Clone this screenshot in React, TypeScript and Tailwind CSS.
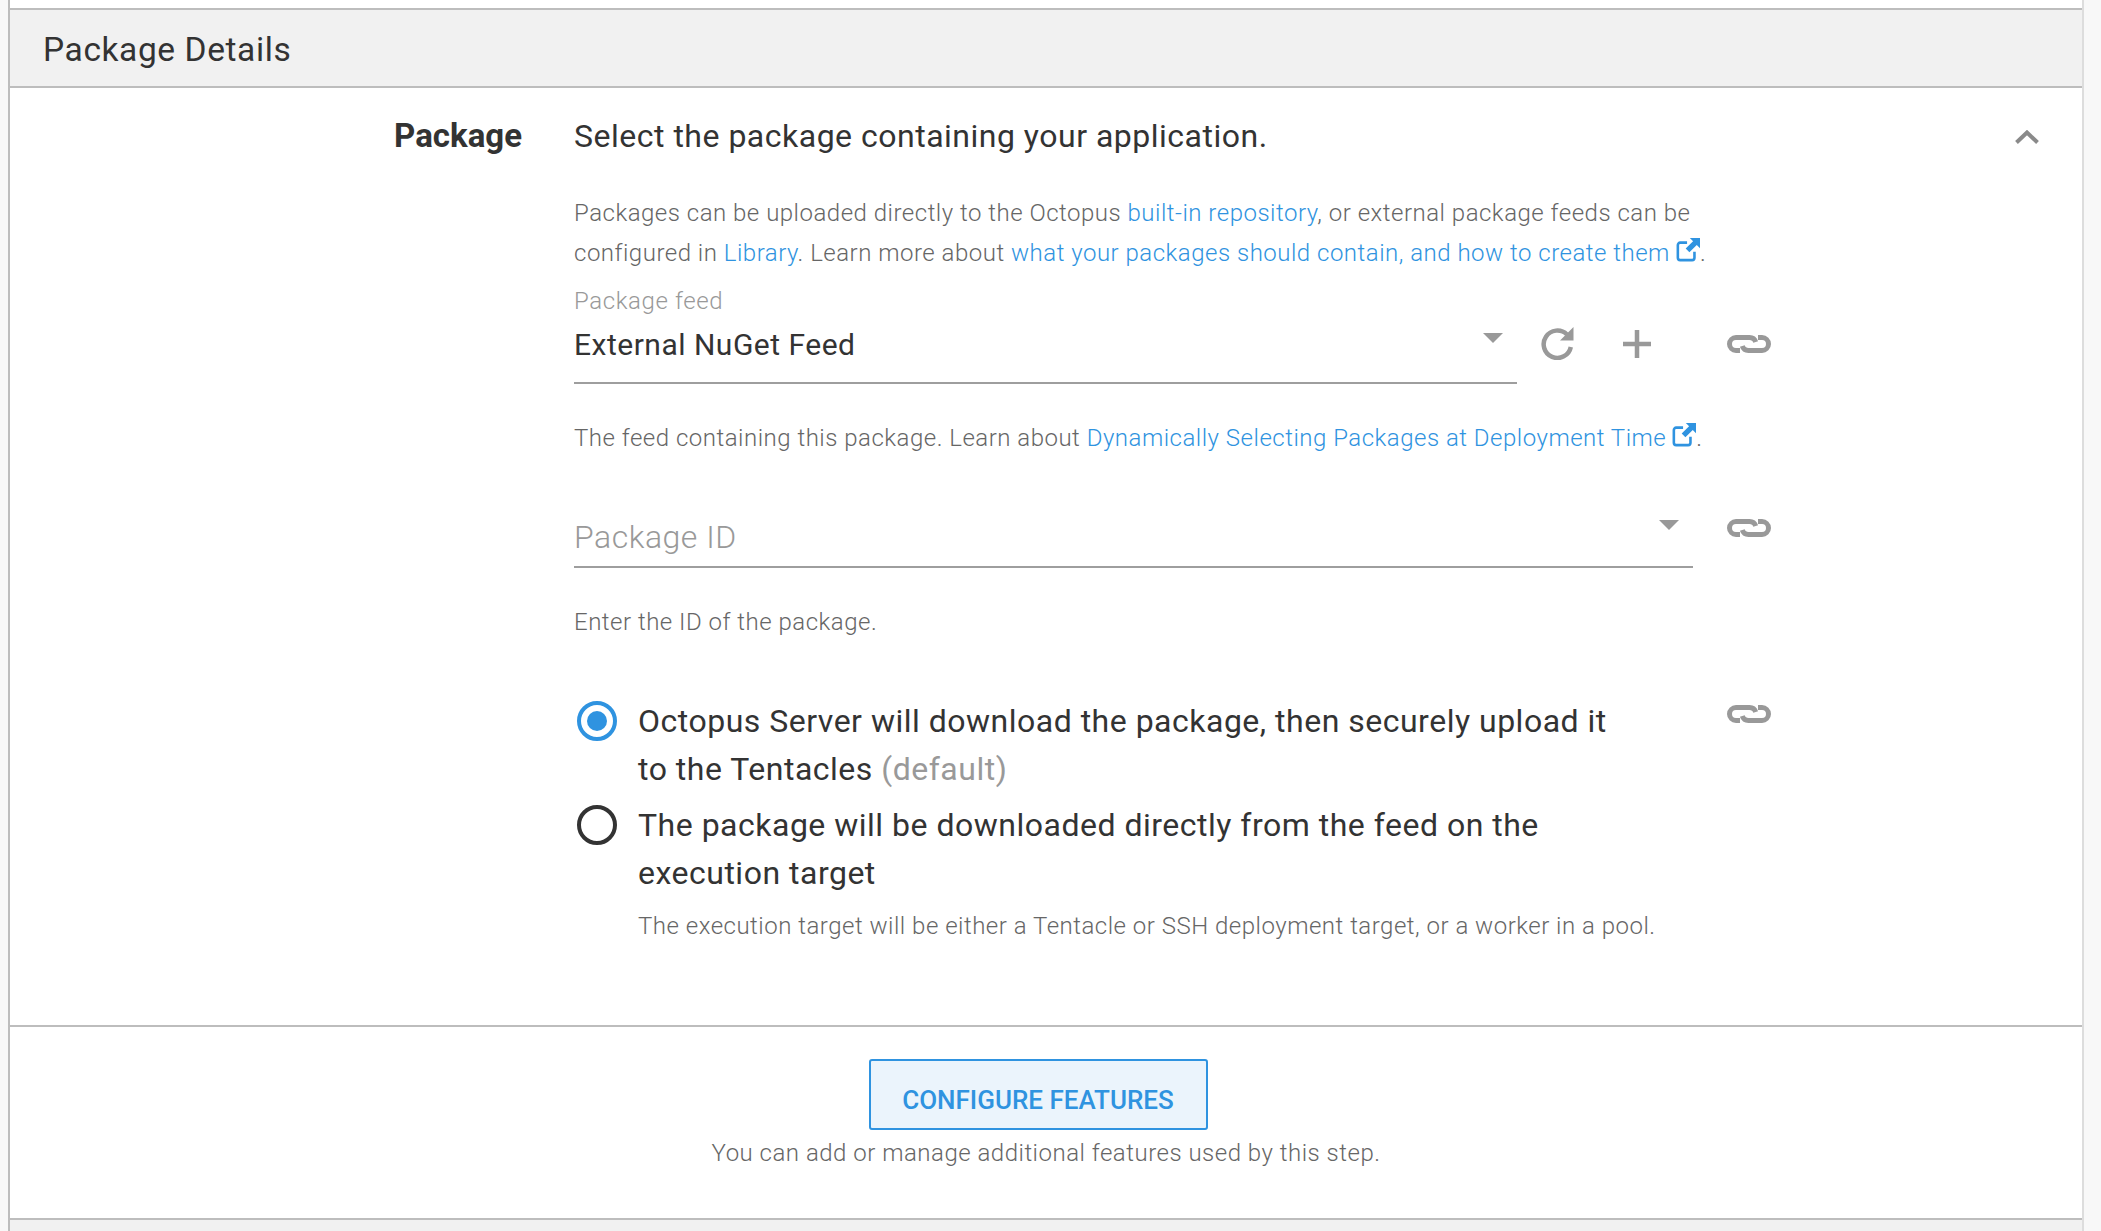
const LINK = 'text-[#2f93e0]';
const HELP = 'font-light text-[24px] leading-[40px] tracking-[0.5px] text-[#666666]';

function ExternalIcon() {
  return (
    <svg viewBox="0 0 26 26" className={`inline-block w-[24px] h-[24px] align-[-1px] ml-[6px] ${LINK}`}>
      <path d="M12 5H4.500A2.500 2.500 0 0 0 2 7.500v14A2.500 2.500 0 0 0 4.500 24h13a2.500 2.500 0 0 0 2.500-2.500V15" fill="none" stroke="currentColor" strokeWidth="2.800" />
      <path d="M15 0h11v11l-3.500-3.500-8 8-4-4 8-8z" fill="currentColor" />
    </svg>
  );
}

function ChainIcon() {
  return (
    <svg viewBox="0 0 44 18" className="w-[44px] h-[18px] shrink-0 text-[#999999]">
      <path d="M13 15.500H9a6.500 6.500 0 0 1 0-13h13.500a6.500 6.500 0 0 1 6.200 4.500" fill="none" stroke="currentColor" strokeWidth="5" />
      <path d="M31 2.500h4a6.500 6.500 0 0 1 0 13H21.500a6.500 6.500 0 0 1-6.200-4.500" fill="none" stroke="currentColor" strokeWidth="5" />
    </svg>
  );
}

function RedoIcon() {
  return (
    <svg viewBox="0 0 33 33" className="ml-[24px] mt-[9px] w-[33px] h-[33px] text-[#999999]">
      <path d="M26 7.500A13.700 13.700 0 1 0 29.800 20" fill="none" stroke="currentColor" strokeWidth="4.500" />
      <path d="M32.500 0v13.500H19z" fill="currentColor" />
    </svg>
  );
}

function Caret() {
  return <div className="w-0 h-0 border-l-[10px] border-r-[10px] border-t-[10px] border-l-transparent border-r-transparent border-t-[#999999]" />;
}

export default function App() {
  return (
    <div className="w-[2101px] h-[1231px] overflow-hidden bg-[#f8f8f8] font-['Roboto',sans-serif] text-[#333333]">
      <div className="ml-[8px] mr-[17px] border-l-2 border-r-2 border-l-[#bdbdbd] border-r-[#dddddd] bg-white pt-[8px]">
        {/* Section header */}
        <div className="h-[80px] bg-[#f1f1f1] border-y-[2px] border-[#bdbdbd] flex items-center pl-[33px] pt-[4px] text-[33.500px] tracking-[0.6px]">
          Package Details
        </div>

        {/* Package row */}
        <div className="flex h-[937px]">
          <div className="w-[512px] pt-[28px] text-right text-[33px] leading-[40px] font-bold shrink-0">Package</div>
          <div className="ml-[52px] flex-1 pt-[28px] min-w-0">
            <div className="flex justify-between pr-[43px]">
              <div className="text-[32px] leading-[40px] tracking-[0.5px]">Select the package containing your application.</div>
              <svg viewBox="0 0 24 14" className="w-[24px] h-[14px] mt-[14px] text-[#8a8a8a]" fill="none" stroke="currentColor" strokeWidth="4">
                <path d="M1.500 12.500 12 2.500 22.500 12.500" />
              </svg>
            </div>

            <div className={`mt-[37px] ${HELP}`}>
              Packages can be uploaded directly to the Octopus <a className={LINK}>built-in repository</a>, or external package feeds can be
              <br />
              configured in <a className={LINK}>Library</a>. Learn more about <a className={LINK}>what your packages should contain, and how to create them<ExternalIcon /></a>.
            </div>

            <div className="mt-[12px] text-[24px] leading-[32px] font-light tracking-[0.6px] text-[#999999]">Package feed</div>
            <div className="flex items-start mt-[1px]">
              <div className="w-[943px] h-[66px] border-b-2 border-[#9e9e9e] flex justify-between pr-[14px] shrink-0">
                <span className="text-[30px] leading-[54px] tracking-[0.5px]">External NuGet Feed</span>
                <div className="mt-[15px]"><Caret /></div>
              </div>
              <RedoIcon />
              <svg viewBox="0 0 28 28" className="ml-[49px] mt-[12px] w-[28px] h-[28px] text-[#999999]">
                <path d="M14 0v28M0 14h28" stroke="currentColor" strokeWidth="4.500" />
              </svg>
              <div className="ml-[76px] mt-[17px]"><ChainIcon /></div>
            </div>

            <div className={`mt-[34px] ${HELP}`}>
              The feed containing this package. Learn about <a className={LINK}>Dynamically Selecting Packages at Deployment Time<ExternalIcon /></a>.
            </div>

            <div className="flex items-start mt-[52px]">
              <div className="w-[1119px] h-[58px] border-b-2 border-[#9e9e9e] flex justify-between items-start pr-[14px] shrink-0">
                <span className="text-[32px] leading-[54px] font-light text-[#999999] tracking-[0.5px]">Package ID</span>
                <div className="mt-[10px]"><Caret /></div>
              </div>
              <div className="ml-[34px] mt-[9px]"><ChainIcon /></div>
            </div>

            <div className={`mt-[34px] ${HELP}`}>Enter the ID of the package.</div>

            <div className="flex items-start mt-[55px]">
              <div className="w-[1119px] shrink-0">
                <div className="flex">
                  <div className="ml-[3px] w-[40px] h-[40px] rounded-full border-[4px] border-[#2f93e0] flex items-center justify-center shrink-0 mt-[4px]">
                    <div className="w-[20px] h-[20px] rounded-full bg-[#2f93e0]" />
                  </div>
                  <div className="ml-[21px] w-[1000px] text-[32px] leading-[48px] tracking-[0.5px]">
                    Octopus Server will download the package, then securely upload it to the Tentacles <span className="text-[#999999]">(default)</span>
                  </div>
                </div>
                <div className="flex mt-[8px]">
                  <div className="ml-[3px] w-[40px] h-[40px] rounded-full border-[4px] border-[#333333] shrink-0 mt-[4px]" />
                  <div className="ml-[21px] w-[1000px] text-[32px] leading-[48px] tracking-[0.5px]">
                    The package will be downloaded directly from the feed on the execution target
                  </div>
                </div>
                <div className={`ml-[64px] mt-[9px] ${HELP}`}>The execution target will be either a Tentacle or SSH deployment target, or a worker in a pool.</div>
              </div>
              <div className="ml-[34px] mt-[8px]"><ChainIcon /></div>
            </div>
          </div>
        </div>

        {/* Footer with button */}
        <div className="h-[195px] border-y-2 border-[#bdbdbd] flex flex-col items-center pt-[32px]">
          <button className="mr-[16px] w-[339px] h-[71px] rounded-[3px] border-2 border-[#2f93e0] bg-[#ebf4fc] text-[#2f93e0] font-medium text-[26px] pt-[11px]">CONFIGURE FEATURES</button>
          <div className="mt-[3px] text-[24px] leading-[40px] font-light tracking-[0.5px] text-[#666666]">You can add or manage additional features used by this step.</div>
        </div>
        <div className="h-[12px] bg-[#f1f1f1]" />
      </div>
    </div>
  );
}
